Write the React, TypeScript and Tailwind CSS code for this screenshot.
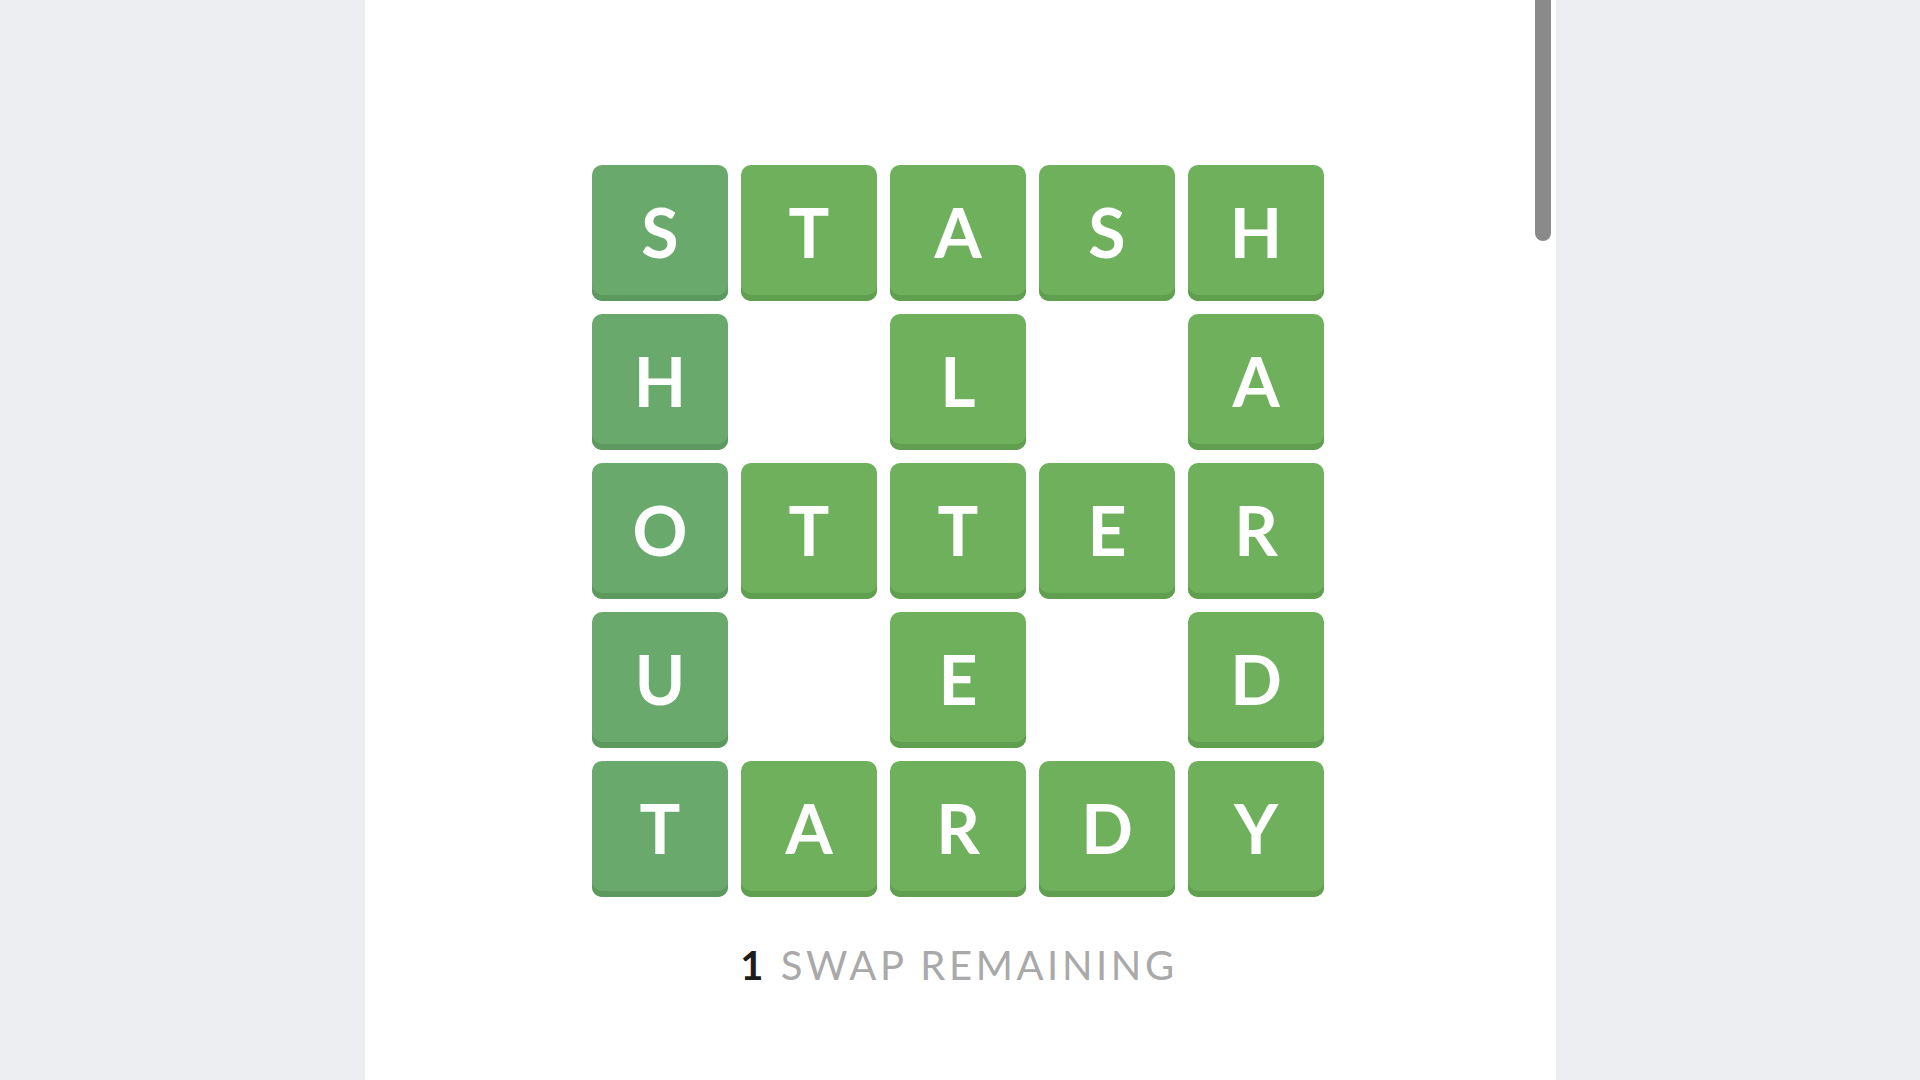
const GRID = ['STASH', 'H L A', 'OTTER', 'U E D', 'TARDY'];

function Tile({ letter, col }: { letter: string; col: number }) {
  if (letter === ' ') return <div className="h-[136px] w-[136px]" />;
  const first = col === 0;
  return (
    <div
      className={
        first
          ? 'flex h-[136px] w-[136px] items-center justify-center rounded-[10px] bg-[#69a96c] pb-[2px] text-white shadow-[inset_0_-6px_0_#5c995f]'
          : 'flex h-[136px] w-[136px] items-center justify-center rounded-[10px] bg-[#6eb05c] pb-[2px] text-white shadow-[inset_0_-6px_0_#619f50]'
      }
    >
      <span className="text-[68px] font-bold leading-none">{letter}</span>
    </div>
  );
}

export default function App() {
  return (
    <main className="flex h-screen w-full justify-center bg-[#eceef1] font-['Lato',sans-serif]">
      <section className="relative flex h-full w-[1191px] flex-col items-center bg-white pt-[165px]">
        <div className="mr-[4px] grid grid-cols-[repeat(5,136px)] gap-[13px]">
          {GRID.map((row, r) =>
            row.split('').map((ch, c) => <Tile key={`${r}-${c}`} letter={ch} col={c} />),
          )}
        </div>
        <p className="mr-[2px] mt-[48px] text-[40px] leading-none tracking-[0.09em] text-[#a9a9a9]">
          <span className="font-bold text-[#1c1c1c]">1</span> SWAP REMAINING
        </p>
        {/* scrollbar thumb */}
        <div className="absolute right-[5px] top-0 h-[241px] w-[16px] rounded-b-full bg-[#8a8a8a]" />
      </section>
    </main>
  );
}
